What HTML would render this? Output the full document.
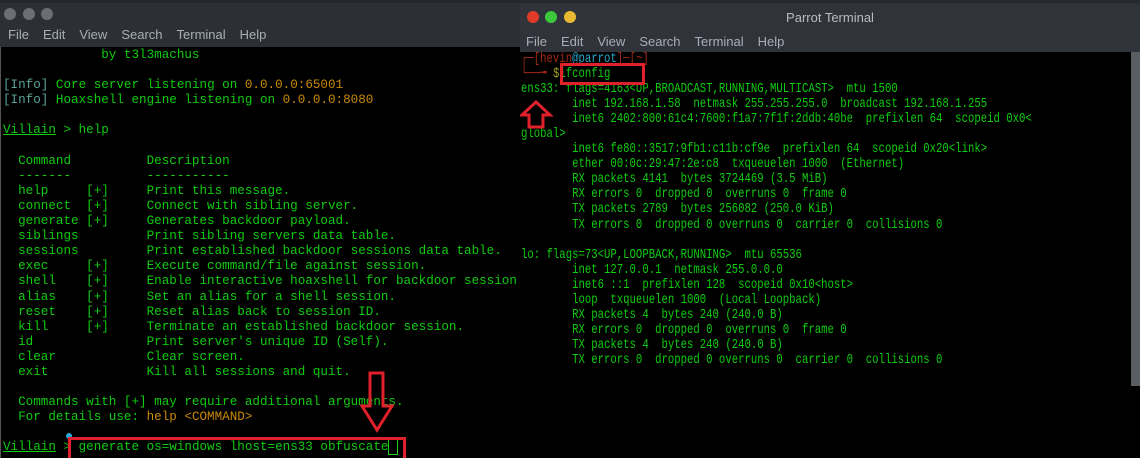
<!DOCTYPE html>
<html><head><meta charset="utf-8"><style>
*{margin:0;padding:0;box-sizing:border-box}
body{width:1140px;height:458px;overflow:hidden;background:#000;position:relative;font-family:"Liberation Sans",sans-serif}
.win{position:absolute;overflow:hidden;background:#000}
.bar{position:absolute;left:0;right:0;top:0;background:#2f3338}
.menu{position:absolute;font-size:13px;color:#a8aeb5;word-spacing:0}
.menu span{margin-right:14px}
pre{position:absolute;font-family:"Liberation Mono",monospace;white-space:pre;color:#1ed41e}
.o{color:#c98a0a}.c{color:#5aa39a}.r{color:#a52a16}.cy{color:#2aa8c8}
.dot{position:absolute;width:12px;height:12px;border-radius:50%}
</style></head><body>
<div class="win" style="left:0;top:0;width:1140px;height:458px">
 <div class="bar" style="height:47px;background:#2c3035"></div>
 <div style="position:absolute;left:0;top:0;width:1140px;height:3px;background:#25282c"></div>
 <div class="dot" style="left:4px;top:8px;background:#6b6e72"></div>
 <div class="dot" style="left:23px;top:8px;background:#6b6e72"></div>
 <div class="dot" style="left:41px;top:8px;background:#6b6e72"></div>
 <div class="menu" style="left:8px;top:27px"><span>File</span><span>Edit</span><span>View</span><span>Search</span><span>Terminal</span><span>Help</span></div>
 <div style="position:absolute;left:0;top:47px;width:1px;height:411px;background:#555"></div>
 <pre style="left:3px;top:48px;font-size:12.6px;line-height:15.1px;color:#10cc10">             by t3l3machus

<span class="c">[Info]</span> Core server listening on <span class="o">0.0.0.0:65001</span>
<span class="c">[Info]</span> Hoaxshell engine listening on <span class="o">0.0.0.0:8080</span>

<u>Villain</u> &gt; help

  Command          Description
  -------          -----------
  help     [+]     Print this message.
  connect  [+]     Connect with sibling server.
  generate [+]     Generates backdoor payload.
  siblings         Print sibling servers data table.
  sessions         Print established backdoor sessions data table.
  exec     [+]     Execute command/file against session.
  shell    [+]     Enable interactive hoaxshell for backdoor session.
  alias    [+]     Set an alias for a shell session.
  reset    [+]     Reset alias back to session ID.
  kill     [+]     Terminate an established backdoor session.
  id               Print server's unique ID (Self).
  clear            Clear screen.
  exit             Kill all sessions and quit.

  Commands with [+] may require additional arguments.
  For details use: <span class="o">help &lt;COMMAND&gt;</span>

<u>Villain</u> &gt; generate os=windows lhost=ens33 obfuscate<span style="border:1px solid #1ed41e">&nbsp;</span></pre>
 <div style="position:absolute;left:66px;top:433px;width:6px;height:6px;border-radius:50%;background:#2aa8d8"></div>
 <div style="position:absolute;left:68px;top:437px;width:338px;height:24px;border:3px solid #e0202a"></div>
 <svg style="position:absolute;left:358px;top:370px" width="38" height="64"><path d="M12 3 H25 V36 H34 L19 60 L4 36 H12 Z" fill="none" stroke="#e0202a" stroke-width="3"/></svg>
</div>

<div class="win" style="left:520px;top:4px;width:620px;height:454px">
 <div class="bar" style="height:48px;background:#30343a"></div>
 <div class="dot" style="left:7px;top:7px;background:#e03a28"></div>
 <div class="dot" style="left:25px;top:7px;background:#3cc83c"></div>
 <div class="dot" style="left:44px;top:7px;background:#e8b830"></div>
 <div style="position:absolute;left:0;right:0;top:6px;text-align:center;font-size:13px;color:#b8bcc2">Parrot Terminal</div>
 <div class="menu" style="left:6px;top:30px"><span>File</span><span>Edit</span><span>View</span><span>Search</span><span>Terminal</span><span>Help</span></div>
 <div style="position:absolute;left:611px;top:48px;width:9px;height:334px;background:#5a5d62"></div>
 <pre style="left:1px;top:48px;font-size:14px;line-height:15.05px;transform:scaleX(0.76);transform-origin:0 0;color:#10cc10"><span class="r">┌─[</span><span class="r">hevin</span><span class="cy">@parrot</span><span class="r">]─[</span><span class="r">~</span><span class="r">]</span>
<span class="r">└──╼ </span><span style="color:#a0a020">$</span>ifconfig
ens33: flags=4163&lt;UP,BROADCAST,RUNNING,MULTICAST&gt;  mtu 1500
        inet 192.168.1.58  netmask 255.255.255.0  broadcast 192.168.1.255
        inet6 2402:800:61c4:7600:f1a7:7f1f:2ddb:40be  prefixlen 64  scopeid 0x0&lt;
global&gt;
        inet6 fe80::3517:9fb1:c11b:cf9e  prefixlen 64  scopeid 0x20&lt;link&gt;
        ether 00:0c:29:47:2e:c8  txqueuelen 1000  (Ethernet)
        RX packets 4141  bytes 3724469 (3.5 MiB)
        RX errors 0  dropped 0  overruns 0  frame 0
        TX packets 2789  bytes 256082 (250.0 KiB)
        TX errors 0  dropped 0 overruns 0  carrier 0  collisions 0

lo: flags=73&lt;UP,LOOPBACK,RUNNING&gt;  mtu 65536
        inet 127.0.0.1  netmask 255.0.0.0
        inet6 ::1  prefixlen 128  scopeid 0x10&lt;host&gt;
        loop  txqueuelen 1000  (Local Loopback)
        RX packets 4  bytes 240 (240.0 B)
        RX errors 0  dropped 0  overruns 0  frame 0
        TX packets 4  bytes 240 (240.0 B)
        TX errors 0  dropped 0 overruns 0  carrier 0  collisions 0</pre>
 <div style="position:absolute;left:40px;top:59px;width:85px;height:22px;border:3px solid #e0202a"></div>
 <svg style="position:absolute;left:0px;top:96px" width="34" height="30"><path d="M16 2 L30 15 H23 V27 H9 V15 H2 Z" fill="none" stroke="#e0202a" stroke-width="3"/></svg>
</div>
</body></html>
